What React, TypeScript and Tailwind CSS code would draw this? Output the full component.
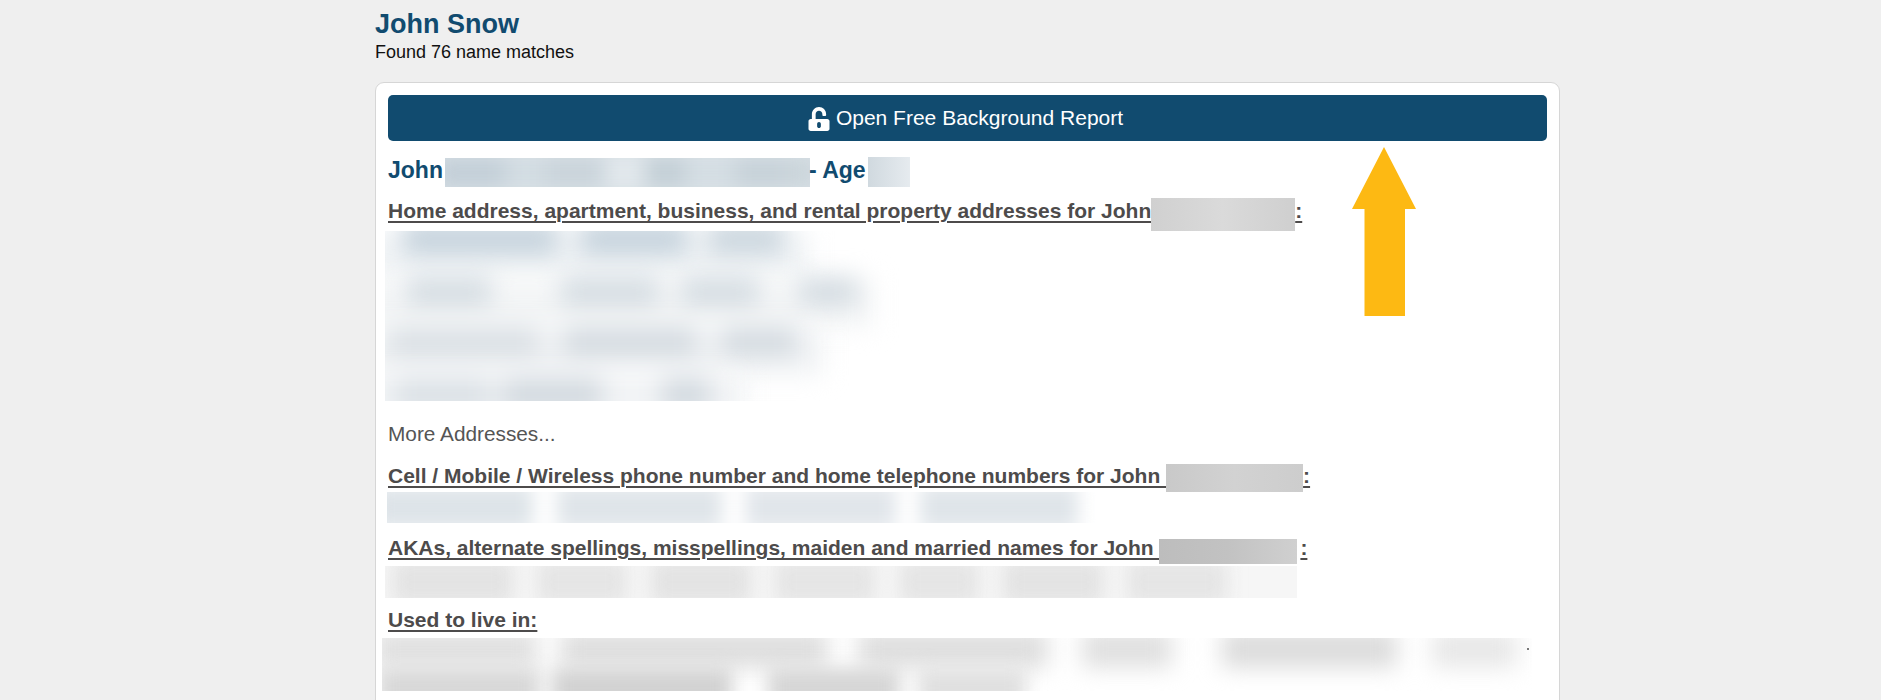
import React from "react";
import { FaUnlockAlt } from "react-icons/fa";

function Redact({ className }: { className: string }) {
  return <span className={"block shrink-0 " + className} />;
}

function Heading({ text, redact, colon, colonClass, textClass, className }: { text: string; redact: string; colon?: string; colonClass?: string; textClass: string; className: string }) {
  return (
    <div className={"relative flex items-center text-[21px] font-bold leading-[22px] text-[#4d4b4b] " + className}>
      <span className={"underline underline-offset-[3px] decoration-[2px] whitespace-pre " + textClass}>{text}</span>
      <Redact className={redact} />
      <span className={"underline underline-offset-[3px] decoration-[2px] " + textClass + " " + (colonClass ?? "")}>{colon ?? ":"}</span>
    </div>
  );
}

function Seg({ className }: { className: string }) {
  return <span className={"block shrink-0 " + className} />;
}

export default function App() {
  return (
    <div className="relative h-[700px] w-full overflow-hidden bg-[#efefef] font-['Liberation_Sans',Arial,sans-serif]">
      <div className="ml-[375px] w-[1185px]">
        <h1 className="pt-[9px] text-[27px] font-bold leading-[31px] text-[#114b6f]">John Snow</h1>
        <p className="mt-[2px] text-[18px] leading-[21px] text-[#111]">Found 76 name matches</p>

        <div className="mt-[19px] h-[640px] rounded-t-[9px] border border-[#d6d6d6] bg-white px-[12px] pt-[12px]">
          <button className="flex h-[46px] w-full items-center justify-center gap-[6px] rounded-[5px] bg-[#114b6f] text-[21px] text-white">
            <FaUnlockAlt className="ml-[-4px] h-[24px] w-[22px] translate-y-[1px]" />
            <span>Open Free Background Report</span>
          </button>

          <div className="mt-[16px] flex h-[30px] items-center text-[23px] font-bold text-[#114b6f]">
            <span className="mb-[3px]">John</span>
            <div className="ml-[2px] h-[29px] w-[365px] overflow-hidden bg-[#d9e1e6]">
              <div className="ml-[-10px] flex h-full blur-[10px]">
                <Seg className="h-full w-[70px] bg-[#c2ced7]" />
                <Seg className="h-full w-[40px] bg-[#d2dce2]" />
                <Seg className="h-full w-[60px] bg-[#c9d3da]" />
                <Seg className="h-full w-[40px] bg-[#e3e9ed]" />
                <Seg className="h-full w-[40px] bg-[#c2ced5]" />
                <Seg className="h-full w-[50px] bg-[#d4dde3]" />
                <Seg className="h-full w-[50px] bg-[#c6d1d8]" />
                <Seg className="h-full w-[30px] bg-[#cad4da]" />
              </div>
            </div>
            <span className="mb-[3px] ml-[-1px]">- Age</span>
            <Redact className="ml-[2px] h-[30px] w-[42px] bg-gradient-to-r from-[#d0d9df] to-[#e6ebef]" />
          </div>

          <Heading
            text="Home address, apartment, business, and rental property addresses for John"
            redact="h-[33px] w-[144px] bg-gradient-to-r from-[#d0d0d0] via-[#dadada] to-[#cfcfcf]"
            textClass="mb-[7px]"
            className="mt-[11px] h-[33px]"
          />

          <div className="ml-[-3px] h-[170px] w-[530px] overflow-hidden">
            <div className="ml-[-24px] flex h-[48px] w-[448px] bg-[#f1f4f6] blur-[12px]">
              <Seg className="ml-[42px] mt-[-10px] h-[34px] w-[155px] bg-[#c6d3dd]" />
              <Seg className="ml-[22px] mt-[-10px] h-[34px] w-[108px] bg-[#c6d3dd]" />
              <Seg className="ml-[20px] mt-[-10px] h-[34px] w-[76px] bg-[#ccd7df]" />
            </div>
            <div className="ml-[-24px] flex h-[48px] w-[512px] bg-[#f3f5f6] blur-[12px]">
              <Seg className="ml-[46px] mt-[-2px] h-[28px] w-[84px] bg-[#d3dbe1]" />
              <Seg className="ml-[70px] mt-[-2px] h-[28px] w-[98px] bg-[#d3dbe1]" />
              <Seg className="ml-[22px] mt-[-2px] h-[28px] w-[78px] bg-[#d3dbe1]" />
              <Seg className="ml-[40px] mt-[-2px] h-[28px] w-[58px] bg-[#d3dbe1]" />
            </div>
            <div className="ml-[-24px] flex h-[48px] w-[462px] bg-[#f1f3f5] blur-[12px]">
              <Seg className="ml-[28px] h-[28px] w-[150px] bg-[#d8dee3]" />
              <Seg className="ml-[24px] h-[28px] w-[134px] bg-[#d2d9df]" />
              <Seg className="ml-[24px] h-[28px] w-[76px] bg-[#d2d9df]" />
            </div>
            <div className="ml-[-24px] flex h-[40px] w-[384px] bg-[#f1f3f5] blur-[12px]">
              <Seg className="ml-[34px] mt-[2px] h-[36px] w-[95px] bg-[#dbe1e6]" />
              <Seg className="ml-[12px] mt-[2px] h-[36px] w-[100px] bg-[#d3dae0]" />
              <Seg className="ml-[60px] mt-[2px] h-[36px] w-[48px] bg-[#d3dae0]" />
            </div>
          </div>

          <p className="mt-[21px] text-[20.8px] leading-[24px] text-[#555]">More Addresses...</p>

          <Heading
            text="Cell / Mobile / Wireless phone number and home telephone numbers for John "
            redact="h-[28px] w-[137px] bg-gradient-to-r from-[#c9c9c9] via-[#d2d2d2] to-[#cdcdcd]"
            textClass="mb-[5px]"
            className="mt-[18px] h-[28px]"
          />

          <div className="ml-[-1px] h-[31px] w-[709px] overflow-hidden">
            <div className="ml-[-14px] flex h-[31px] w-[760px] scale-y-150 items-stretch blur-[9px]">
              <Seg className="w-[160px] bg-[#dbe2e7]" />
              <Seg className="w-[24px] bg-white" />
              <Seg className="w-[165px] bg-[#dde3e8]" />
              <Seg className="w-[24px] bg-white" />
              <Seg className="w-[150px] bg-[#dfe4e9]" />
              <Seg className="w-[24px] bg-white" />
              <Seg className="w-[158px] bg-[#dde3e8]" />
              <Seg className="w-[30px] bg-white" />
            </div>
          </div>

          <Heading
            text="AKAs, alternate spellings, misspellings, maiden and married names for John "
            redact="h-[25px] w-[138px] bg-gradient-to-r from-[#bdbdbd] via-[#c2c2c2] to-[#d0d0d0]"
            textClass="mb-[6px]"
            colonClass="ml-[3px]"
            className="mt-[13px] h-[30px]"
          />

          <div className="ml-[-3px] h-[32px] w-[912px] overflow-hidden bg-[#f6f6f6]">
            <div className="ml-[-8px] flex h-[32px] w-[940px] scale-y-150 blur-[9px]">
              <Seg className="ml-[16px] h-full w-[120px] bg-[#e2e2e2]" />
              <Seg className="ml-[24px] h-full w-[90px] bg-[#e4e4e4]" />
              <Seg className="ml-[24px] h-full w-[100px] bg-[#e2e2e2]" />
              <Seg className="ml-[24px] h-full w-[100px] bg-[#e4e4e4]" />
              <Seg className="ml-[24px] h-full w-[80px] bg-[#e4e4e4]" />
              <Seg className="ml-[24px] h-full w-[100px] bg-[#e2e2e2]" />
              <Seg className="ml-[24px] h-full w-[100px] bg-[#e4e4e4]" />
            </div>
          </div>

          <Heading text="Used to live in:" redact="w-0" colon="" textClass="mb-[6px]" className="mt-[10px] h-[30px]" />

          <div className="relative ml-[-6px] h-[53px] w-[1150px] overflow-hidden">
            <div className="ml-[-8px] flex h-[30px] blur-[11px]">
              <Seg className="mt-[-8px] h-[38px] w-[164px] bg-[#e0e0e0]" />
              <Seg className="ml-[22px] mt-[-8px] h-[38px] w-[268px] bg-[#dedede]" />
              <Seg className="ml-[30px] mt-[-8px] h-[38px] w-[190px] bg-[#dedede]" />
              <Seg className="ml-[34px] mt-[-8px] h-[38px] w-[90px] bg-[#e0e0e0]" />
              <Seg className="ml-[50px] mt-[-8px] h-[38px] w-[175px] bg-[#dcdcdc]" />
              <Seg className="ml-[35px] mt-[-8px] h-[38px] w-[85px] bg-[#e8e8e8]" />
            </div>
            <div className="ml-[-8px] flex h-[23px] blur-[9px]">
              <Seg className="ml-[4px] h-[40px] w-[162px] bg-[#d8d8d8]" />
              <Seg className="ml-[12px] h-[40px] w-[180px] bg-[#d2d2d2]" />
              <Seg className="ml-[36px] h-[40px] w-[132px] bg-[#d6d6d6]" />
              <Seg className="ml-[18px] h-[40px] w-[108px] bg-[#e0e0e0]" />
            </div>
            <span className="absolute right-[3px] top-[10px] h-[2px] w-[2px] bg-[#777]" />
          </div>
        </div>
      </div>

      <svg className="absolute left-[1352px] top-[147px] h-[169px] w-[64px]" viewBox="0 0 64 169">
        <path d="M32 0 L64 62 L53 62 L53 169 L12.5 169 L12.5 62 L0 62 Z" fill="#fdb913" />
      </svg>
    </div>
  );
}
